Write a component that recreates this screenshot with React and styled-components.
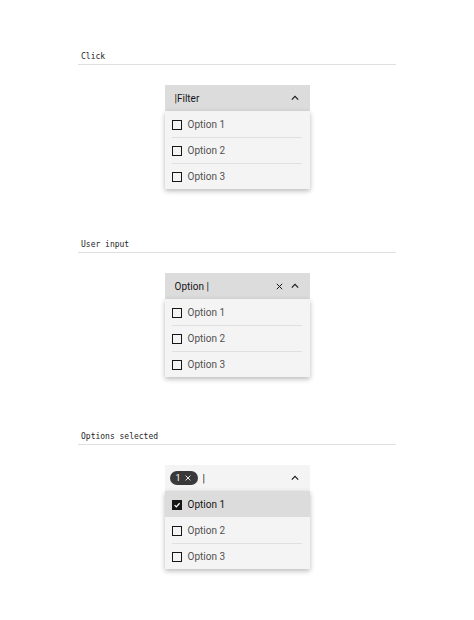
import React from 'react';
import styled, { createGlobalStyle } from 'styled-components';

const GlobalStyle = createGlobalStyle`
    html, body {
        margin: 0;
        padding: 0;
        background: #ffffff;
    }
    body {
        font-family: Roboto, "Noto Sans", sans-serif;
        color: #161616;
    }
`;

const sections = [
    { title: 'Click', mode: 'click', gapAfter: 51 },
    { title: 'User input', mode: 'input', gapAfter: 55 },
    { title: 'Options selected', mode: 'selected', gapAfter: 0 },
];

function Chevron() {
    return (
        <svg width="10" height="10" viewBox="0 0 10 10" fill="none">
            <path d="M1.8 6.6 L5 3.4 L8.2 6.6" stroke="#161616" strokeWidth="1.1" />
        </svg>
    );
}

function Cross({ color = '#161616', size = 9 }) {
    return (
        <svg width={size} height={size} viewBox="0 0 10 10" fill="none">
            <path d="M2 2 L8 8 M8 2 L2 8" stroke={color} strokeWidth="1.1" />
        </svg>
    );
}

function Check() {
    return (
        <svg width="8" height="8" viewBox="0 0 10 10" fill="none">
            <path d="M2 5.2 L4.2 7.3 L8.2 2.8" stroke="#ffffff" strokeWidth="1.6" />
        </svg>
    );
}

function MultiSelect({ mode }) {
    const selected = mode === 'selected';
    const options = ['Option 1', 'Option 2', 'Option 3'];
    return (
        <Dropdown>
            <Field light={selected}>
                {mode === 'click' && <FieldText>|Filter</FieldText>}
                {mode === 'input' && <FieldText>Option |</FieldText>}
                {selected && (
                    <>
                        <Tag>
                            1 <Cross color="#ffffff" size={8} />
                        </Tag>
                        <Caret>|</Caret>
                    </>
                )}
                <Icons>
                    {mode === 'input' && <Cross />}
                    <Chevron />
                </Icons>
            </Field>
            <Menu>
                {options.map((opt, i) => {
                    const checked = selected && i === 0;
                    const hideLine = i === 0 || (selected && i === 1);
                    return (
                        <Item key={opt} active={checked}>
                            <ItemInner noLine={hideLine}>
                                <Box checked={checked}>{checked && <Check />}</Box>
                                <Label active={checked}>{opt}</Label>
                            </ItemInner>
                        </Item>
                    );
                })}
            </Menu>
        </Dropdown>
    );
}

export default function App() {
    return (
        <Page>
            <GlobalStyle />
            {sections.map((s) => (
                <Section key={s.title} gap={s.gapAfter}>
                    <Heading>{s.title}</Heading>
                    <MultiSelect mode={s.mode} />
                </Section>
            ))}
        </Page>
    );
}

const Page = styled.div`
    width: 474px;
    height: 620px;
    overflow: hidden;
    padding-top: 52px;
    box-sizing: border-box;
    display: flex;
    flex-direction: column;
    align-items: center;
`;

const Section = styled.section`
    width: 318px;
    display: flex;
    flex-direction: column;
    align-items: center;
    margin-bottom: ${(p) => p.gap}px;
`;

const Heading = styled.h3`
    align-self: stretch;
    margin: 0 0 20px 0;
    padding: 0 0 2px 3px;
    font-family: "DejaVu Sans Mono", "Liberation Mono", monospace;
    font-weight: 400;
    font-size: 8px;
    line-height: 10px;
    color: #262626;
    border-bottom: 1px solid #e0e0e0;
`;

const Dropdown = styled.div`
    width: 145px;
    display: flex;
    flex-direction: column;
`;

const Field = styled.div`
    height: 26px;
    background: ${(p) => (p.light ? '#f4f4f4' : '#dcdcdc')};
    display: flex;
    align-items: center;
    padding: 0 10px 0 10px;
    box-sizing: border-box;
`;

const FieldText = styled.span`
    font-size: 10px;
    color: #161616;
`;

const Tag = styled.span`
    margin-left: -5px;
    height: 14px;
    width: 28px;
    border-radius: 7px;
    background: #393939;
    color: #ffffff;
    font-size: 9px;
    display: inline-flex;
    align-items: center;
    justify-content: center;
    gap: 3px;
    box-sizing: border-box;
`;

const Caret = styled.span`
    margin-left: 5px;
    font-size: 10px;
    color: #161616;
`;

const Icons = styled.div`
    margin-left: auto;
    display: flex;
    align-items: center;
    gap: 6px;
`;

const Menu = styled.div`
    background: #f4f4f4;
    box-shadow: 0 2px 5px rgba(0, 0, 0, 0.28);
`;

const Item = styled.div`
    height: 26px;
    padding: 0 8px 0 7px;
    background: ${(p) => (p.active ? '#dcdcdc' : 'transparent')};
`;

const ItemInner = styled.div`
    height: 100%;
    display: flex;
    align-items: center;
    gap: 6px;
    box-sizing: border-box;
    border-top: 1px solid ${(p) => (p.noLine ? 'transparent' : '#e0e0e0')};
`;

const Box = styled.span`
    width: 10px;
    height: 10px;
    box-sizing: border-box;
    border: 1px solid #161616;
    background: ${(p) => (p.checked ? '#161616' : 'transparent')};
    display: inline-flex;
    align-items: center;
    justify-content: center;
    flex-shrink: 0;
`;

const Label = styled.span`
    font-size: 10px;
    color: ${(p) => (p.active ? '#161616' : '#525252')};
`;
